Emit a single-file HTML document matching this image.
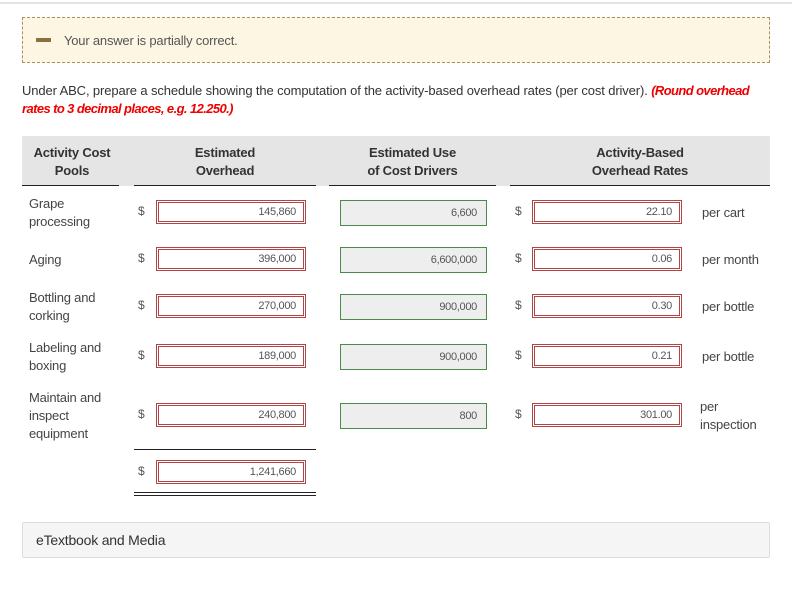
<html><head><style>
body{margin:0;width:792px;height:597px;background:#fff;font-family:"Liberation Sans",sans-serif;color:#333;position:relative;overflow:hidden}
.a{position:absolute}
.in{position:absolute;height:22px;border:1px solid #b04545;box-shadow:inset 0 0 0 1px #fff,inset 0 0 0 2px #b04545;background:#fff;font-size:11px;color:#555;text-align:right;line-height:22px;padding-right:9px;box-sizing:content-box;letter-spacing:-0.3px}
.g{position:absolute;height:24px;border:1px solid #4a8a4a;background:#eee;font-size:11px;color:#555;text-align:right;line-height:24px;padding-right:9px;letter-spacing:-0.3px}
.l{position:absolute;font-size:13px;color:#444;line-height:18px;letter-spacing:-0.2px}
.d{position:absolute;font-size:12px;color:#555}
.h{position:absolute;font-size:13px;font-weight:bold;color:#333;text-align:center;line-height:18px;letter-spacing:-0.2px}
.ul{position:absolute;height:1px;background:#222;top:185px}
</style></head><body>
<div class="a" style="left:0;top:2px;width:792px;height:2px;background:#e3e3e3"></div>
<div class="a" style="left:22px;top:17px;width:746px;height:44px;border:1px dashed #a89060;background:#fdf6e3"></div>
<div class="a" style="left:36px;top:38px;width:15px;height:4px;background:#8a7040"></div>
<div class="a" style="left:64px;top:33px;font-size:13px;color:#555;letter-spacing:-0.2px">Your answer is partially correct.</div>
<div class="a" style="left:22px;top:82px;font-size:13px;color:#333;line-height:18px;width:780px;letter-spacing:-0.12px;white-space:nowrap">Under ABC, prepare a schedule showing the computation of the activity-based overhead rates (per cost driver). <i style="color:#e00;font-weight:bold;letter-spacing:-0.6px">(Round overhead<br>rates to 3 decimal places, e.g. 12.250.)</i></div>
<div class="a" style="left:22px;top:136px;width:748px;height:50px;background:#e5e5e5"></div>
<div class="h" style="left:22px;top:144px;width:100px">Activity Cost<br>Pools</div>
<div class="h" style="left:134px;top:144px;width:182px">Estimated<br>Overhead</div>
<div class="h" style="left:329px;top:144px;width:167px">Estimated Use<br>of Cost Drivers</div>
<div class="h" style="left:510px;top:144px;width:260px">Activity-Based<br>Overhead Rates</div>
<div class="ul" style="left:22px;width:97px"></div>
<div class="ul" style="left:134px;width:182px"></div>
<div class="ul" style="left:329px;width:167px"></div>
<div class="ul" style="left:510px;width:260px"></div>

<div class="l" style="left:29px;top:195px">Grape<br>processing</div>
<div class="d" style="left:138px;top:204px">$</div><div class="in" style="left:156px;top:200px;width:139px">145,860</div>
<div class="g" style="left:340px;top:200px;width:136px">6,600</div>
<div class="d" style="left:515px;top:204px">$</div><div class="in" style="left:532px;top:200px;width:139px">22.10</div>
<div class="l" style="left:702px;top:204px">per cart</div>

<div class="l" style="left:29px;top:251px">Aging</div>
<div class="d" style="left:138px;top:251px">$</div><div class="in" style="left:156px;top:247px;width:139px">396,000</div>
<div class="g" style="left:340px;top:247px;width:136px">6,600,000</div>
<div class="d" style="left:515px;top:251px">$</div><div class="in" style="left:532px;top:247px;width:139px">0.06</div>
<div class="l" style="left:702px;top:251px">per month</div>

<div class="l" style="left:29px;top:289px">Bottling and<br>corking</div>
<div class="d" style="left:138px;top:298px">$</div><div class="in" style="left:156px;top:294px;width:139px">270,000</div>
<div class="g" style="left:340px;top:294px;width:136px">900,000</div>
<div class="d" style="left:515px;top:298px">$</div><div class="in" style="left:532px;top:294px;width:139px">0.30</div>
<div class="l" style="left:702px;top:298px">per bottle</div>

<div class="l" style="left:29px;top:339px">Labeling and<br>boxing</div>
<div class="d" style="left:138px;top:348px">$</div><div class="in" style="left:156px;top:344px;width:139px">189,000</div>
<div class="g" style="left:340px;top:344px;width:136px">900,000</div>
<div class="d" style="left:515px;top:348px">$</div><div class="in" style="left:532px;top:344px;width:139px">0.21</div>
<div class="l" style="left:702px;top:348px">per bottle</div>

<div class="l" style="left:29px;top:389px">Maintain and<br>inspect<br>equipment</div>
<div class="d" style="left:138px;top:407px">$</div><div class="in" style="left:156px;top:403px;width:139px">240,800</div>
<div class="g" style="left:340px;top:403px;width:136px">800</div>
<div class="d" style="left:515px;top:407px">$</div><div class="in" style="left:532px;top:403px;width:139px">301.00</div>
<div class="l" style="left:700px;top:398px">per<br>inspection</div>

<div class="a" style="left:134px;top:449px;width:182px;height:1px;background:#222"></div>
<div class="d" style="left:138px;top:464px">$</div><div class="in" style="left:156px;top:460px;width:139px">1,241,660</div>
<div class="a" style="left:134px;top:492px;width:182px;height:1px;background:#222"></div>
<div class="a" style="left:134px;top:495px;width:182px;height:1px;background:#222"></div>

<div class="a" style="left:22px;top:522px;width:746px;height:34px;border:1px solid #ddd;background:#f5f5f5;border-radius:2px"></div>
<div class="a" style="left:36px;top:532px;font-size:14px;color:#333;letter-spacing:-0.2px">eTextbook and Media</div>
</body></html>
